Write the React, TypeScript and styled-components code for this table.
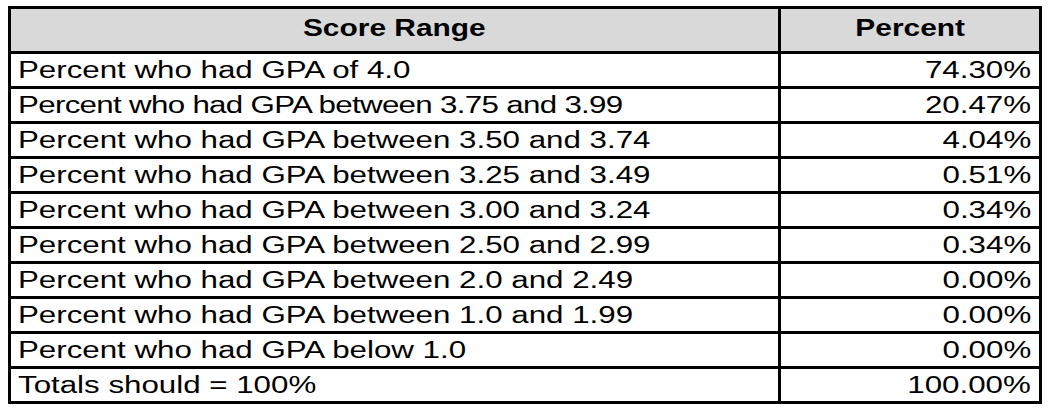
import React from "react";
import styled, { createGlobalStyle } from "styled-components";

const Global = createGlobalStyle`
  html, body { margin: 0; padding: 0; background: #ffffff; }
  body { padding: 6px 0 0 8px; font-family: "Liberation Sans", Arial, sans-serif; color: #000; }
`;

const Table = styled.table`
  table-layout: fixed;
  border-collapse: separate;
  border-spacing: 0;
  width: 1034px;
  border-top: 3px solid #000;
  border-left: 3px solid #000;
  box-sizing: border-box;
`;

const HeadCell = styled.th`
  box-sizing: border-box;
  height: 45px;
  padding: 0 0 3px 0;
  border-right: 3px solid #000;
  border-bottom: 3px solid #000;
  background: #d9d9d9;
  font-weight: 700;
  font-size: 23px;
  line-height: 39px;
  text-align: center;
  vertical-align: middle;
  white-space: nowrap;
`;

const Cell = styled.td<{ $align: "left" | "right" }>`
  box-sizing: border-box;
  height: 35px;
  padding: 0 ${(p) => (p.$align === "right" ? "8px" : "0")} 0
    ${(p) => (p.$align === "left" ? "7px" : "0")};
  border-right: 3px solid #000;
  border-bottom: 3px solid #000;
  font-size: 23px;
  line-height: 32px;
  text-align: ${(p) => p.$align};
  vertical-align: top;
  white-space: nowrap;
`;

const Stretch = styled.span<{
  $origin: "left" | "right" | "center";
  $scale: number;
  $tight?: boolean;
}>`
  display: inline-block;
  transform: scaleX(${(p) => p.$scale});
  transform-origin: ${(p) => p.$origin} center;
  letter-spacing: ${(p) => (p.$tight ? "-0.5px" : "0")};
`;

const rows: { label: string; value: string; tight?: boolean }[] = [
  { label: "Percent who had GPA of 4.0", value: "74.30%" },
  { label: "Percent who had GPA between 3.75 and 3.99", value: "20.47%", tight: true },
  { label: "Percent who had GPA between 3.50 and 3.74", value: "4.04%" },
  { label: "Percent who had GPA between 3.25 and 3.49", value: "0.51%" },
  { label: "Percent who had GPA between 3.00 and 3.24", value: "0.34%" },
  { label: "Percent who had GPA between 2.50 and 2.99", value: "0.34%" },
  { label: "Percent who had GPA between 2.0 and 2.49", value: "0.00%" },
  { label: "Percent who had GPA between 1.0 and 1.99", value: "0.00%" },
  { label: "Percent who had GPA below 1.0", value: "0.00%" },
  { label: "Totals should = 100%", value: "100.00%" },
];

export default function App() {
  return (
    <>
      <Global />
      <Table>
        <colgroup>
          <col style={{ width: 770 }} />
          <col style={{ width: 261 }} />
        </colgroup>
        <thead>
          <tr>
            <HeadCell>
              <Stretch $origin="center" $scale={1.3}>Score Range</Stretch>
            </HeadCell>
            <HeadCell>
              <Stretch $origin="center" $scale={1.3}>Percent</Stretch>
            </HeadCell>
          </tr>
        </thead>
        <tbody>
          {rows.map((r) => (
            <tr key={r.label}>
              <Cell $align="left">
                <Stretch $origin="left" $scale={1.36} $tight={r.tight}>
                  {r.label}
                </Stretch>
              </Cell>
              <Cell $align="right">
                <Stretch $origin="right" $scale={1.36}>
                  {r.value}
                </Stretch>
              </Cell>
            </tr>
          ))}
        </tbody>
      </Table>
    </>
  );
}
